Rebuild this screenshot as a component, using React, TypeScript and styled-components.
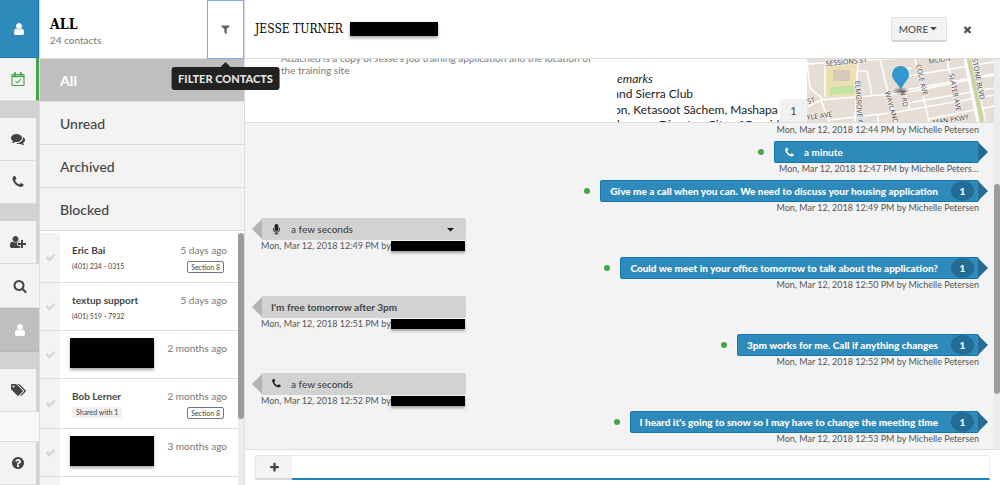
import React from "react";
import styled, { createGlobalStyle, css } from "styled-components";

const c = {
  blue: "#2e8aba",
  blueEdge: "#0f78ae",
  blueDark: "#236c93",
  green: "#46a546",
  panel: "#f3f3f3",
  line: "#dddddd",
  rail: "#d2d2d2",
  mid: "#bfbfbf",
  text: "#444444",
  soft: "#777777",
};

const GlobalStyle = createGlobalStyle`
  *, *::before, *::after { box-sizing: border-box; }
  body { margin: 0; font-family: Lato, "Liberation Sans", sans-serif; color: ${c.text}; background: #fff; }
  button, input { font-family: inherit; color: inherit; }
  button { cursor: pointer; }
  h1, h2, p, ul { margin: 0; padding: 0; }
  ul { list-style: none; }
`;

/* ---------- icons ---------- */

const paths = {
  user: "M1536 1399q0 109-62.5 187t-150.5 78h-854q-88 0-150.5-78t-62.5-187q0-85 8.5-160.5t31.5-152 58.5-131 94-89 134.5-34.5q131 128 313 128t313-128q76 0 134.5 34.5t94 89 58.5 131 31.5 152 8.5 160.5zm-256-887q0 159-112.5 271.5t-271.5 112.5-271.5-112.5-112.5-271.5 112.5-271.5 271.5-112.5 271.5 112.5 112.5 271.5z",
  phone: "M1600 1240q0 27-10 70.5t-21 68.5q-21 50-122 106-94 51-186 51-27 0-52.5-3.5t-57.5-12.5-47.5-14.5-55.5-20.5-49-18q-98-35-175-83-128-79-264.5-215.5t-215.5-264.5q-48-77-83-175-3-9-18-49t-20.5-55.5-14.5-47.5-12.5-57.5-3.5-52.5q0-92 51-186 56-101 106-122 25-11 68.5-21t70.5-10q14 0 21 3 18 6 53 76 11 19 30 54t35 63.5 31 53.5q3 4 17.5 25t21.5 35.5 7 28.5q0 20-28.5 50t-62 55-62 53-28.5 46q0 9 5 22.5t8.5 20.5 14 24 11.5 19q76 137 174 235t235 174q2 1 19 11.5t24 14 20.5 8.5 22.5 5q18 0 46-28.5t53-62 55-62 50-28.5q14 0 28.5 7t35.5 21.5 25 17.5q25 15 53.5 31t63.5 35 54 30q70 35 76 53 3 7 3 21z",
  search: "M1216 832q0-185-131.5-316.5t-316.5-131.5-316.5 131.5-131.5 316.5 131.5 316.5 316.5 131.5 316.5-131.5 131.5-316.5zm512 832q0 52-38 90t-90 38q-54 0-90-38l-343-342q-179 124-399 124-143 0-273.5-55.5t-225-150-150-225-55.5-273.5 55.5-273.5 150-225 225-150 273.5-55.5 273.5 55.5 225 150 150 225 55.5 273.5q0 220-124 399l343 343q37 37 37 90z",
  check: "M1671 566q0 40-28 68l-724 724-136 136q-28 28-68 28t-68-28l-136-136-362-362q-28-28-28-68t28-68l136-136q28-28 68-28t68 28l294 295 656-657q28-28 68-28t68 28l136 136q28 28 28 68z",
  times: "M1490 1322q0 40-28 68l-136 136q-28 28-68 28t-68-28l-294-294-294 294q-28 28-68 28t-68-28l-136-136q-28-28-28-68t28-68l294-294-294-294q-28-28-28-68t28-68l136-136q28-28 68-28t68 28l294 294 294-294q28-28 68-28t68 28l136 136q28 28 28 68t-28 68l-294 294 294 294q28 28 28 68z",
  plus: "M1600 736v192q0 40-28 68t-68 28h-416v416q0 40-28 68t-68 28h-192q-40 0-68-28t-28-68v-416h-416q-40 0-68-28t-28-68v-192q0-40 28-68t68-28h416v-416q0-40 28-68t68-28h192q40 0 68 28t28 68v416h416q40 0 68 28t28 68z",
  filter: "M1595 295q17 41-14 70l-493 493v742q0 42-39 59-13 5-25 5-27 0-45-19l-256-256q-19-19-19-45v-486l-493-493q-31-29-14-70 17-39 59-39h1280q42 0 59 39z",
  caret: "M1408 704q0 26-19 45l-448 448q-19 19-45 19t-45-19l-448-448q-19-19-19-45t19-45 45-19h896q26 0 45 19t19 45z",
  help: "M1024 1376v-192q0-14-9-23t-23-9h-192q-14 0-23 9t-9 23v192q0 14 9 23t23 9h192q14 0 23-9t9-23zm256-672q0-88-55.5-163t-138.5-116-170-41q-243 0-371 213-15 24 8 42l132 100q7 6 19 6 16 0 25-12 53-68 86-92 34-24 86-24 48 0 85.5 26t37.5 59q0 38-20 61t-68 45q-63 28-115.5 86.5t-52.5 125.5v36q0 14 9 23t23 9h192q14 0 23-9t9-23q0-19 21.5-49.5t54.5-49.5q32-18 49-28.5t46-35 44.5-48 28-60.5 12.5-81zm384 192q0 209-103 385.5t-279.5 279.5-385.5 103-385.5-103-279.5-279.5-103-385.5 103-385.5 279.5-279.5 385.5-103 385.5 103 279.5 279.5 103 385.5z",
  comments: "M1408 768q0 139-94 257t-256.5 186.5-353.5 68.5q-86 0-176-16-124 88-278 128-36 9-86 16h-3q-11 0-20.5-8t-11.5-21q-1-3-1-6.5t.5-6.5 2-6l2.5-5 3.5-5.5 4-5 4.5-5 4-4.5q5-6 23-25t26-29.5 22.5-29 25-38.5 20.5-44q-124-72-195-177t-71-224q0-139 94-257t256.5-186.5 353.5-68.5 353.5 68.5 256.5 186.5 94 257zm384 256q0 120-71 224.5t-195 176.5q10 24 20.5 44t25 38.5 22.5 29 26 29.5 23 25q1 1 4 4.5t4.5 5 4 5 3.5 5.5l2.5 5 2 6 .5 6.5-1 6.5q-3 14-13 22t-22 7q-50-7-86-16-154-40-278-128-90 16-176 16-271 0-472-132 58 4 88 4 161 0 309-45t264-129q125-92 192-212t67-254q0-77-23-152 129 71 204 178t75 230z",
  tags: "M576 448q0-53-37.5-90.5t-90.5-37.5-90.5 37.5-37.5 90.5 37.5 90.5 90.5 37.5 90.5-37.5 37.5-90.5zm1067 576q0 53-37 90l-491 492q-39 37-91 37-53 0-90-37l-715-716q-38-37-64.5-101t-26.5-117v-416q0-52 38-90t90-38h416q53 0 117 26.5t102 64.5l715 714q37 39 37 91zm384 0q0 53-37 90l-491 492q-39 37-91 37-36 0-59-14t-53-45l470-470q37-37 37-90 0-52-37-91l-715-714q-38-38-102-64.5t-117-26.5h224q53 0 117 26.5t102 64.5l715 714q37 39 37 91z",
  mic: "M1472 704v128q0 221-147.5 384.5t-364.5 187.5v132h256q26 0 45 19t19 45-19 45-45 19h-640q-26 0-45-19t-19-45 19-45 45-19h256v-132q-217-24-364.5-187.5t-147.5-384.5v-128q0-26 19-45t45-19 45 19 19 45v128q0 185 131.5 316.5t316.5 131.5 316.5-131.5 131.5-316.5v-128q0-26 19-45t45-19 45 19 19 45zm-256-384v512q0 132-94 226t-226 94-226-94-94-226v-512q0-132 94-226t226-94 226 94 94 226z",
  userPlus: "M704 896q-159 0-271.5-112.5t-112.5-271.5 112.5-271.5 271.5-112.5 271.5 112.5 112.5 271.5-112.5 271.5-271.5 112.5zm960 128h352q13 0 22.5 9.5t9.5 22.5v192q0 13-9.5 22.5t-22.5 9.5h-352v352q0 13-9.5 22.5t-22.5 9.5h-192q-13 0-22.5-9.5t-9.5-22.5v-352h-352q-13 0-22.5-9.5t-9.5-22.5v-192q0-13 9.5-22.5t22.5-9.5h352v-352q0-13 9.5-22.5t22.5-9.5h192q13 0 22.5 9.5t9.5 22.5v352zm-736 224q0 52 38 90t90 38h256v238q-68 50-171 50h-874q-121 0-194-69t-73-190q0-53 3.5-103.5t14-109 26.5-108.5 43-97.5 62-81 85.5-53.5 111.5-20q19 0 39 17 79 61 154.5 91.5t164.5 30.5 164.5-30.5 154.5-91.5q20-17 39-17 132 0 217 96h-223q-52 0-90 38t-38 90v192z",
};

type IconName = keyof typeof paths;

const Glyph = styled.svg`
  display: block;
  flex: none;
  fill: currentColor;
`;

function Icon({ name, size = 14 }: { name: IconName; size?: number }) {
  const wide = name === "tags" || name === "userPlus";
  return (
    <Glyph
      width={wide ? Math.round((size * 8) / 7) : size}
      height={size}
      viewBox={wide ? "0 0 2048 1792" : "0 0 1792 1792"}
      aria-hidden="true"
    >
      <path d={paths[name]} />
    </Glyph>
  );
}

function CalendarCheck() {
  return (
    <svg width="14" height="14" viewBox="0 0 14 14" fill="none" stroke={c.green} aria-hidden="true">
      <rect x="1" y="2.5" width="12" height="11" rx="0.6" strokeWidth="1.1" />
      <path d="M1 4.4h12" strokeWidth="1.6" />
      <path d="M4 0.6v3M10 0.6v3" strokeWidth="1.7" strokeLinecap="round" />
      <path d="M4.4 8.9l1.9 1.9 3.5-3.6" strokeWidth="1.1" />
    </svg>
  );
}

/* ---------- page frame ---------- */

const Page = styled.div`
  display: flex;
  height: 100vh;
  overflow: hidden;
`;

/* ---------- navigation rail ---------- */

const Rail = styled.nav`
  display: flex;
  flex-direction: column;
  flex: none;
  width: 39px;
  background: ${c.rail};
`;

const RailGroup = styled.div`
  display: flex;
  flex-direction: column;
  margin-bottom: 17px;
`;

const RailButton = styled.button<{ $tone?: "brand" | "marked" | "open" | "current" }>`
  display: flex;
  align-items: center;
  justify-content: center;
  flex: none;
  height: 43px;
  padding: 0;
  border: 0;
  border-right: 3px solid ${c.rail};
  border-bottom: 1px solid ${c.line};
  background: ${c.panel};
  ${(p) => p.$tone === "brand" && css`
    height: 58px;
    border-right: 1px solid ${c.blueEdge};
    border-bottom-color: ${c.blueEdge};
    background: ${c.blue};
    color: #fff;
  `}
  ${(p) => p.$tone === "marked" && css`border-right-color: ${c.green};`}
  ${(p) => p.$tone === "open" && css`
    height: 44px;
    border-right: 0;
  `}
  ${(p) => p.$tone === "current" && css`
    height: 44px;
    border-right: 0;
    border-bottom-color: #b8b8b8;
    background: ${c.mid};
    color: #fff;
  `}
`;

const RailSpace = styled.div`
  flex: 1;
  margin-top: -17px;
  border-bottom: 1px solid ${c.line};
  background: #f8f8f8;
`;

/* ---------- contacts column ---------- */

const Sidebar = styled.aside`
  display: flex;
  flex-direction: column;
  flex: none;
  width: 206px;
  border-left: 1px solid ${c.line};
  border-right: 1px solid ${c.line};
`;

const SideHeader = styled.header`
  display: flex;
  flex: none;
  height: 59px;
  border-bottom: 1px solid ${c.line};
`;

const SideTitle = styled.div`
  flex: 1;
  padding: 16px 0 0 10px;
`;

const Heading = styled.h1<{ $small?: boolean }>`
  font-family: "DejaVu Serif Condensed", "DejaVu Serif", serif;
  font-stretch: condensed;
  font-size: ${(p) => (p.$small ? 12 : 14)}px;
  font-weight: ${(p) => (p.$small ? 400 : 700)};
  line-height: 16px;
  color: #000;
`;

const Count = styled.p`
  font-size: 10px;
  line-height: 16px;
  color: ${c.soft};
`;

const FilterWrap = styled.div`
  position: relative;
  display: flex;
`;

const FilterButton = styled.button`
  display: flex;
  align-items: center;
  justify-content: center;
  width: 37px;
  height: 59px;
  padding: 0;
  border: 1px solid #82a8f4;
  background: #fff;
  color: #666;
`;

const Tooltip = styled.div`
  position: absolute;
  z-index: 2;
  top: 67px;
  left: 50%;
  transform: translateX(-50%);
  padding: 0 7px;
  border-radius: 3px;
  background: #222;
  color: #e2e2e2;
  font-size: 11px;
  font-weight: 900;
  line-height: 23px;
  white-space: nowrap;
  &::before {
    content: "";
    position: absolute;
    top: -5px;
    left: 50%;
    margin-left: -5px;
    border: 5px solid transparent;
    border-top: 0;
    border-bottom-color: #222;
  }
`;

const Folder = styled.button<{ $on?: boolean }>`
  display: block;
  width: 100%;
  height: 43px;
  padding: 0 20px;
  border: 0;
  border-bottom: 1px solid ${c.line};
  background: ${(p) => (p.$on ? c.mid : c.panel)};
  color: ${(p) => (p.$on ? "#fff" : c.text)};
  font-size: 14px;
  font-weight: ${(p) => (p.$on ? 900 : 500)};
  text-align: left;
`;

const ContactPane = styled.div`
  display: flex;
  flex: 1;
  min-height: 0;
  padding-top: 2px;
  overflow: hidden;
`;

const ContactList = styled.ul`
  flex: 1;
  min-width: 0;
`;

const Contact = styled.li<{ $tagged?: boolean }>`
  display: flex;
  height: ${(p) => (p.$tagged ? 50 : 48)}px;
  border-bottom: 1px solid ${c.line};
`;

const Pick = styled.label`
  position: relative;
  display: flex;
  align-items: center;
  justify-content: center;
  flex: none;
  width: 20px;
  background: ${c.panel};
  color: #d6d6d6;
  input {
    position: absolute;
    opacity: 0;
    margin: 0;
  }
`;

const ContactMain = styled.div`
  flex: 1;
  min-width: 0;
  padding: 9px 0 0 12px;
`;

const ContactSide = styled.div`
  display: flex;
  flex-direction: column;
  align-items: flex-end;
  padding: 9px 11px 0 0;
`;

const Name = styled.h2`
  font-size: 10px;
  font-weight: 700;
  line-height: 16px;
`;

const Phone = styled.p`
  font-size: 7px;
  line-height: 16px;
`;

const When = styled.p`
  font-size: 10px;
  line-height: 16px;
  color: ${c.soft};
  white-space: nowrap;
`;

const Tag = styled.span`
  display: inline-block;
  margin: 3px 3px 0 0;
  padding: 0 3px;
  border: 1px solid #6c7684;
  border-radius: 2px;
  font-size: 7px;
  line-height: 10px;
`;

const Shared = styled.span`
  display: block;
  width: max-content;
  margin-top: 3px;
  padding: 0 4px;
  border-radius: 2px;
  background: #f0f0f0;
  font-size: 7px;
  line-height: 11px;
`;

const Redacted = styled.div<{ $w: number; $h: number }>`
  flex: none;
  width: ${(p) => p.$w}px;
  height: ${(p) => p.$h}px;
  background: #000;
  box-shadow: 0 2px 3px rgba(0, 0, 0, 0.35);
`;

const HiddenName = styled.div`
  flex: 1;
  padding: 7px 0 0 10px;
`;

const Track = styled.div`
  display: flex;
  flex-direction: column;
  flex: none;
  width: 6px;
  background: #ececec;
`;

const TrackGap = styled.div<{ $share: number }>`
  flex: ${(p) => p.$share} 0 0;
`;

const Thumb = styled.div<{ $share: number }>`
  flex: ${(p) => p.$share} 0 0;
  border-radius: 3px;
  background: #9c9c9c;
`;

function Scrollbar({ before, size }: { before: number; size: number }) {
  return (
    <Track>
      <TrackGap $share={before} />
      <Thumb $share={size} />
      <TrackGap $share={100 - before - size} />
    </Track>
  );
}

/* ---------- conversation ---------- */

const Main = styled.main`
  display: flex;
  flex-direction: column;
  flex: 1;
  min-width: 0;
`;

const MainHeader = styled.header`
  display: flex;
  align-items: center;
  flex: none;
  gap: 7px;
  height: 59px;
  padding: 0 27px 0 10px;
  border-bottom: 1px solid ${c.line};
`;

const Spacer = styled.div`
  flex: 1;
`;

const MoreButton = styled.button`
  display: flex;
  align-items: center;
  justify-content: center;
  width: 56px;
  height: 25px;
  padding: 0;
  border: 1px solid #e0e0e0;
  border-bottom: 2px solid #d4d4d4;
  border-radius: 2px;
  background: ${c.panel};
  font-size: 10px;
`;

const CloseButton = styled.button`
  display: flex;
  margin-left: 8px;
  padding: 0;
  border: 0;
  background: none;
  color: #555;
`;

const Feed = styled.div`
  display: flex;
  flex: 1;
  min-height: 0;
  background: ${c.panel};
`;

const FeedBody = styled.div`
  display: flex;
  flex-direction: column;
  flex: 1;
  min-width: 0;
`;

const Note = styled.article`
  display: flex;
  flex: none;
  height: 64px;
  overflow: hidden;
  border-bottom: 1px solid ${c.line};
  background: #fff;
`;

const NoteText = styled.p`
  flex: 1;
  margin-top: -7px;
  padding-left: 36px;
  font-size: 10px;
  line-height: 12px;
  color: ${c.soft};
`;

const Scan = styled.figure`
  position: relative;
  flex: none;
  width: 190px;
  margin: 0;
`;

const PageBadge = styled.span`
  position: absolute;
  right: 0;
  bottom: 0;
  width: 27px;
  border-radius: 3px 0 0 0;
  background: #f1f1f1;
  font-size: 11px;
  line-height: 23px;
  text-align: center;
`;

const MapFigure = styled.figure`
  flex: none;
  width: 187px;
  margin: 0;
`;

const Messages = styled.ul`
  display: flex;
  flex-direction: column;
  flex: 1;
  min-height: 0;
  padding: 0 15px 0 16px;
`;

const FirstMeta = styled.li`
  flex: none;
  display: flex;
  align-items: flex-start;
  justify-content: flex-end;
  height: 17px;
  padding-top: 1px;
`;

const Message = styled.li<{ $out?: boolean }>`
  display: flex;
  flex: 1;
  flex-direction: column;
  align-items: ${(p) => (p.$out ? "flex-end" : "flex-start")};
  padding-top: 1px;
`;

const BubbleLine = styled.div`
  display: flex;
  align-items: center;
  gap: 10px;
`;

const Dot = styled.span`
  width: 6px;
  height: 6px;
  border-radius: 50%;
  background: ${c.green};
`;

const Bubble = styled.div<{ $out?: boolean; $wide?: boolean }>`
  position: relative;
  display: flex;
  align-items: center;
  gap: 9px;
  height: 22px;
  padding: 0 9px;
  ${(p) => p.$wide && css`width: 205px;`}
  border: 1px solid ${(p) => (p.$out ? c.blueEdge : "#d2d2d2")};
  border-radius: 2px;
  background: ${(p) => (p.$out ? c.blue : "#d2d2d2")};
  color: ${(p) => (p.$out ? "#fff" : c.text)};
  font-size: 10px;
  font-weight: ${(p) => (p.$out ? 900 : 700)};
  white-space: nowrap;
  &::after {
    content: "";
    position: absolute;
    top: 0;
    border: 10px solid transparent;
    ${(p) =>
      p.$out
        ? css`left: 100%; border-right: 0; border-left-color: ${c.blueDark};`
        : css`right: 100%; border-left: 0; border-right-color: #b4b4b4;`}
  }
`;

const CallText = styled.span<{ $out?: boolean }>`
  flex: 1;
  font-weight: ${(p) => (p.$out ? 700 : 500)};
`;

const Recipients = styled.span`
  width: 23px;
  height: 20px;
  margin: 0 -5px 0 4px;
  border-radius: 50%;
  background: ${c.blueDark};
  line-height: 20px;
  text-align: center;
`;

const PlayMenu = styled.button`
  display: flex;
  padding: 0;
  border: 0;
  background: none;
  color: #111;
`;

const IconSlot = styled.span<{ $dark?: boolean }>`
  color: ${(p) => (p.$dark ? "#222" : "inherit")};
`;

const Meta = styled.p<{ $clip?: boolean }>`
  display: flex;
  align-items: center;
  max-width: ${(p) => (p.$clip ? "200px" : "none")};
  font-size: 9px;
  line-height: 12px;
  color: #555;
  white-space: nowrap;
`;

const MetaText = styled.span`
  overflow: hidden;
  text-overflow: ellipsis;
`;

/* ---------- composer ---------- */

const Composer = styled.form`
  display: flex;
  flex: none;
  height: 36px;
  padding: 5px 10px;
  border-top: 1px solid ${c.line};
`;

const AddButton = styled.button`
  display: flex;
  align-items: center;
  justify-content: center;
  width: 37px;
  padding: 0;
  border: 1px solid #e2e2e2;
  border-right: 0;
  border-bottom: 2px solid #d8d8d8;
  border-radius: 2px 0 0 2px;
  background: ${c.panel};
`;

const MessageInput = styled.input`
  flex: 1;
  min-width: 0;
  padding: 0 8px;
  border: 1px solid #ececec;
  border-left: 0;
  border-bottom: 2px solid #1c86bd;
  border-radius: 0 2px 0 0;
  outline: 0;
  background: #fff;
  font-size: 10px;
`;

/* ---------- attachments ---------- */

function DocumentScan() {
  return (
    <svg width="190" height="63" viewBox="0 0 190 63" fontFamily="Lato, sans-serif" fontSize="12" fill="#222" role="img" aria-label="Scanned page">
      <text x="0" y="24" fontStyle="italic">emarks</text>
      <text x="-4" y="39">and Sierra Club</text>
      <text x="-3" y="55">on, Ketasoot Sâchem, Mashapa</text>
      <text x="0" y="70">l</text>
      <text x="42" y="70">Director, City of Provid</text>
    </svg>
  );
}

function StreetMap() {
  return (
    <svg width="187" height="63" viewBox="0 0 187 63" role="img" aria-label="Map">
      <defs>
        <radialGradient id="pinShade">
          <stop offset="0" stopColor="#000" stopOpacity="0.55" />
          <stop offset="1" stopColor="#000" stopOpacity="0" />
        </radialGradient>
      </defs>
      <rect width="187" height="63" fill="#e6ddd6" />
      <path d="M19 6h31l-1 31-30 1z" fill="#ecdfb1" />
      <path d="M26 11h17v11H26z" fill="#d8c8b8" />
      <path d="M23 28l24-2v8l-24 2z" fill="#c1e5a0" />
      <g fill="none" stroke="#fff" strokeWidth="1.5">
        <path d="M0 5l187-12M18 6v32M51 0l-3 63M0 3l3 26 13 11M0 48l14-7 8 22M14 41l35-3 48-4 90-18M51 12h9l5 24M22 61l62-7 103-18M73 0l15 63M85 12l20-3M89 19l98-16M93 32l94-17M108 0l14 63M140 0l12 63M96 45l91-16M121 60l66-13M71 56v7M98 34l5 17" />
      </g>
      <path d="M158 0l13 63" stroke="#fff" strokeWidth="3" />
      <path d="M162 0l13 63" stroke="#c9d69b" strokeWidth="4" />
      <path d="M165 0l14 63" stroke="#fff" strokeWidth="1" />
      <g fontFamily="'Open Sans', 'Noto Sans', sans-serif" fontSize="7" fill="#444" stroke="#f3efeb" strokeWidth="1.5" paintOrder="stroke">
        <text transform="translate(19 7) rotate(-5)">SESSIONS ST</text>
        <text transform="translate(122 5) rotate(-9)">MOUN</text>
        <text transform="translate(109 6) rotate(77)">COLE AVE</text>
        <text transform="translate(48 22) rotate(86)">ELMGROVE A</text>
        <text transform="translate(78 33) rotate(75)">WAYLAND</text>
        <text transform="translate(93 32) rotate(78)">N RD</text>
        <text transform="translate(142 15) rotate(79)">SLATER AVE</text>
        <text transform="translate(165 0) rotate(79)">STONE BLVD</text>
        <text transform="translate(1 45) rotate(-14)">ST</text>
        <text transform="translate(0 61) rotate(-8)">YLE AVE</text>
        <text transform="translate(126 66) rotate(-9)">MAN PKWY</text>
      </g>
      <ellipse cx="94" cy="32" rx="9" ry="4" fill="url(#pinShade)" />
      <path d="M94 31C91 24 85 21 85 15.500a8.500 8.500 0 0 1 17 0C102 21 96 24 94 31z" fill="#3097cf" />
    </svg>
  );
}

/* ---------- data ---------- */

type Person = { name?: string; phone?: string; shared?: string; when: string; tag?: string };

const people: Person[] = [
  { name: "Eric Bai", phone: "(401) 234 - 0315", when: "5 days ago", tag: "Section 8" },
  { name: "textup support", phone: "(401) 519 - 7932", when: "5 days ago" },
  { when: "2 months ago" },
  { name: "Bob Lerner", shared: "Shared with 1", when: "2 months ago", tag: "Section 8" },
  { when: "3 months ago" },
];

type Item = { out?: boolean; icon?: IconName; text: string; time: string; menu?: boolean };

const items: Item[] = [
  { out: true, icon: "phone", text: "a minute", time: "12:47" },
  { out: true, text: "Give me a call when you can. We need to discuss your housing application", time: "12:49" },
  { icon: "mic", text: "a few seconds", time: "12:49", menu: true },
  { out: true, text: "Could we meet in your office tomorrow to talk about the application?", time: "12:50" },
  { text: "I'm free tomorrow after 3pm", time: "12:51" },
  { out: true, text: "3pm works for me. Call if anything changes", time: "12:52" },
  { icon: "phone", text: "a few seconds", time: "12:52" },
  { out: true, text: "I heard it's going to snow so I may have to change the meeting time", time: "12:53" },
];

const folders = ["All", "Unread", "Archived", "Blocked"];

export default function App() {
  return (
    <Page>
      <GlobalStyle />
      <Rail aria-label="Sections">
        <RailButton $tone="brand" aria-label="Account"><Icon name="user" /></RailButton>
        <RailGroup>
          <RailButton $tone="marked" aria-label="Availability"><CalendarCheck /></RailButton>
        </RailGroup>
        <RailGroup>
          <RailButton aria-label="Messages"><Icon name="comments" /></RailButton>
          <RailButton aria-label="Calls"><Icon name="phone" /></RailButton>
        </RailGroup>
        <RailGroup>
          <RailButton aria-label="Add contact"><Icon name="userPlus" /></RailButton>
          <RailButton $tone="open" aria-label="Search"><Icon name="search" /></RailButton>
          <RailButton $tone="current" aria-label="Contacts"><Icon name="user" /></RailButton>
        </RailGroup>
        <RailGroup>
          <RailButton aria-label="Tags"><Icon name="tags" /></RailButton>
        </RailGroup>
        <RailSpace />
        <RailButton aria-label="Help"><Icon name="help" /></RailButton>
      </Rail>

      <Sidebar>
        <SideHeader>
          <SideTitle>
            <Heading>ALL</Heading>
            <Count>24 contacts</Count>
          </SideTitle>
          <FilterWrap>
            <FilterButton aria-label="Filter contacts" aria-describedby="filter-tip">
              <Icon name="filter" size={11} />
            </FilterButton>
            <Tooltip role="tooltip" id="filter-tip">FILTER CONTACTS</Tooltip>
          </FilterWrap>
        </SideHeader>
        <div>
          {folders.map((f, i) => (
            <Folder key={f} $on={i === 0}>{f}</Folder>
          ))}
        </div>
        <ContactPane>
          <ContactList>
            {people.map((p, i) => (
              <Contact key={i} $tagged={!!p.tag}>
                <Pick>
                  <input type="checkbox" aria-label={`Select ${p.name ?? "contact"}`} />
                  <Icon name="check" size={11} />
                </Pick>
                {p.name ? (
                  <ContactMain>
                    <Name>{p.name}</Name>
                    {p.phone && <Phone>{p.phone}</Phone>}
                    {p.shared && <Shared>{p.shared}</Shared>}
                  </ContactMain>
                ) : (
                  <HiddenName><Redacted $w={84} $h={30} /></HiddenName>
                )}
                <ContactSide>
                  <When>{p.when}</When>
                  {p.tag && <Tag>{p.tag}</Tag>}
                </ContactSide>
              </Contact>
            ))}
            <Contact><Pick as="div" /></Contact>
          </ContactList>
          <Scrollbar before={0} size={74} />
        </ContactPane>
      </Sidebar>

      <Main>
        <MainHeader>
          <Heading as="h2" $small>JESSE TURNER</Heading>
          <Redacted $w={88} $h={14} />
          <Spacer />
          <MoreButton>MORE<Icon name="caret" size={11} /></MoreButton>
          <CloseButton aria-label="Close"><Icon name="times" size={11} /></CloseButton>
        </MainHeader>

        <Feed>
          <FeedBody>
            <Note>
              <NoteText>
                Attached is a copy of Jesse's job training application and the location of
                <br />
                the training site
              </NoteText>
              <Scan>
                <DocumentScan />
                <PageBadge>1</PageBadge>
              </Scan>
              <MapFigure><StreetMap /></MapFigure>
            </Note>
            <Messages>
              <FirstMeta>
                <Meta>Mon, Mar 12, 2018 12:44 PM by Michelle Petersen</Meta>
              </FirstMeta>
              {items.map((m, i) => (
                <Message key={i} $out={m.out}>
                  <BubbleLine>
                    {m.out && <Dot />}
                    <Bubble $out={m.out} $wide={!m.out || !!m.icon}>
                      {m.icon && <IconSlot $dark={!m.out}><Icon name={m.icon} size={11} /></IconSlot>}
                      {m.icon ? <CallText $out={m.out}>{m.text}</CallText> : <span>{m.text}</span>}
                      {m.out && !m.icon && <Recipients>1</Recipients>}
                      {m.menu && <PlayMenu aria-label="Options"><Icon name="caret" size={11} /></PlayMenu>}
                    </Bubble>
                  </BubbleLine>
                  <Meta $clip={m.out && !!m.icon}>
                    <MetaText>
                      Mon, Mar 12, 2018 {m.time} PM by{m.out && " Michelle Petersen"}
                    </MetaText>
                    {!m.out && <Redacted $w={74} $h={10} />}
                  </Meta>
                </Message>
              ))}
            </Messages>
          </FeedBody>
          <Scrollbar before={32} size={54} />
        </Feed>

        <Composer>
          <AddButton type="button" aria-label="Add attachment"><Icon name="plus" size={11} /></AddButton>
          <MessageInput aria-label="Message" />
        </Composer>
      </Main>
    </Page>
  );
}
